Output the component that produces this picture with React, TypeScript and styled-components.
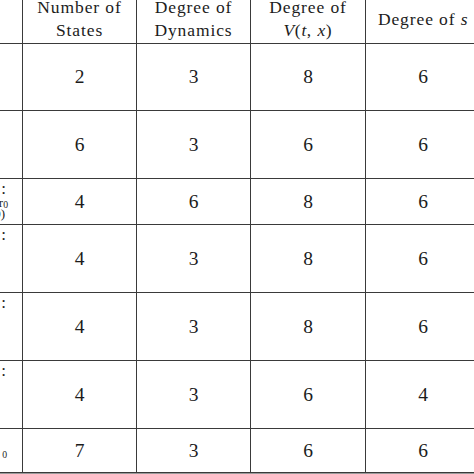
import React from "react";
import styled, { createGlobalStyle } from "styled-components";

const Global = createGlobalStyle`
  html, body {
    margin: 0;
    padding: 0;
    background: #ffffff;
    overflow: hidden;
    width: 474px;
    height: 474px;
  }
`;

const Page = styled.div`
  width: 474px;
  height: 474px;
  overflow: hidden;
  background: #fff;
`;

const Table = styled.div`
  display: grid;
  grid-template-columns: 22px 113px 113px 114px 114px;
  grid-template-rows: 47px 66px 67px 45px 67px 67px 67px 43px;
  gap: 1px;
  padding-bottom: 1px;
  margin-top: -4px;
  background: #3a3a3a;
  width: 480px;
  font-family: "Liberation Serif", "Times New Roman", serif;
  color: #1c1c1c;
`;

const Cell = styled.div`
  background: #fff;
  display: flex;
  align-items: center;
  justify-content: center;
  text-align: center;
  font-size: 19.5px;
`;

const HeadCell = styled(Cell)<{ $shift?: number }>`
  flex-direction: column;
  font-size: 17.5px;
  line-height: 23px;
  letter-spacing: 0.9px;
  padding-bottom: ${(p) => p.$shift ?? 0}px;
`;

const SideCell = styled.div`
  background: #fff;
  overflow: hidden;
  display: flex;
  flex-direction: column;
  align-items: flex-end;
  justify-content: flex-start;
  padding-top: 1px;
  white-space: nowrap;
`;

const SideLine = styled.div<{ $pr: number; $size?: number; $lh?: number; $mt?: number }>`
  font-size: ${(p) => p.$size ?? 17}px;
  line-height: ${(p) => p.$lh ?? 17}px;
  padding-right: ${(p) => p.$pr}px;
  margin-top: ${(p) => p.$mt ?? 0}px;
  flex-shrink: 0;
`;

const Bottom = styled.div`
  height: 6px;
  background: #9a9a9a;
  width: 474px;
`;

const I = styled.i`
  font-style: italic;
  letter-spacing: 0.5px;
`;

const Sub = styled.sub<{ $gap?: number }>`
  font-size: 0.75em;
  vertical-align: -0.15em;
  margin-left: ${(p) => p.$gap ?? 0}px;
`;

type Row = { side: React.ReactNode; vals: string[] };

const rows: Row[] = [
  { side: null, vals: ["2", "3", "8", "6"] },
  { side: null, vals: ["6", "3", "6", "6"] },
  {
    side: (
      <>
        <SideLine $pr={16}>Ex 3 :</SideLine>
        <SideLine $pr={14} $size={13} $lh={9} $mt={1}>
          x = r<Sub>0</Sub>
        </SideLine>
        <SideLine $pr={17} $size={13} $lh={10}>
          x(0)
        </SideLine>
      </>
    ),
    vals: ["4", "6", "8", "6"],
  },
  { side: <SideLine $pr={16}>Ex 4 :</SideLine>, vals: ["4", "3", "8", "6"] },
  { side: <SideLine $pr={16}>Ex 5 :</SideLine>, vals: ["4", "3", "8", "6"] },
  { side: <SideLine $pr={16}>Ex 6 :</SideLine>, vals: ["4", "3", "6", "4"] },
  {
    side: (
      <SideLine $pr={15} $size={13} $lh={13} $mt={16}>
        x<Sub $gap={8}>0</Sub>
      </SideLine>
    ),
    vals: ["7", "3", "6", "6"],
  },
];

export default function App() {
  return (
    <Page>
      <Global />
      <Table>
        <SideCell />
        <HeadCell $shift={2}>
          <span>Number of</span>
          <span>States</span>
        </HeadCell>
        <HeadCell $shift={2}>
          <span>Degree of</span>
          <span>Dynamics</span>
        </HeadCell>
        <HeadCell $shift={2}>
          <span>Degree of</span>
          <span>
            <I>V</I>(<I>t</I>, <I>x</I>)
          </span>
        </HeadCell>
        <HeadCell $shift={0}>
          <span>
            Degree of <I>s</I>
          </span>
        </HeadCell>
        {rows.map((r, i) => (
          <React.Fragment key={i}>
            <SideCell>{r.side}</SideCell>
            {r.vals.map((v, j) => (
              <Cell key={j}>{v}</Cell>
            ))}
          </React.Fragment>
        ))}
      </Table>
      <Bottom />
    </Page>
  );
}
